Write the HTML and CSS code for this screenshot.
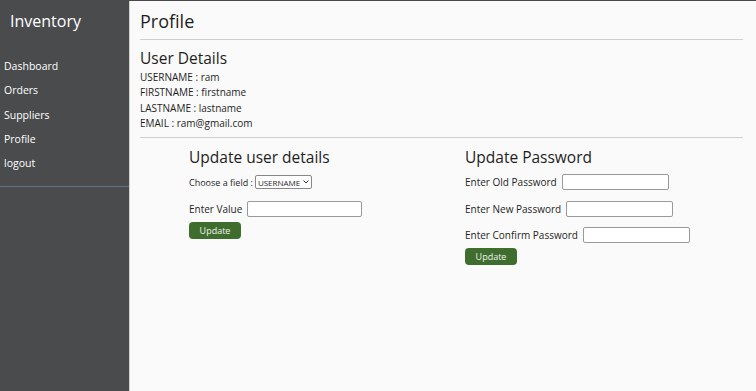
FILE: index.html
```html
<!DOCTYPE html>
<html lang="en">
<head>
    <meta charset="UTF-8">
    <meta name="viewport" content="width=device-width, initial-scale=1.0">
    <title>Inventory - Profile</title>
    <link rel="stylesheet" href="styles.css">
</head>
<body>
    <div class="sidebar">
        <div class="brand">Inventory</div>
        <ul class="nav">
            <li><a href="#">Dashboard</a></li>
            <li><a href="#">Orders</a></li>
            <li><a href="#">Suppliers</a></li>
            <li><a href="#">Profile</a></li>
            <li><a href="#">logout</a></li>
        </ul>
    </div>

    <div class="main">
        <h1>Profile</h1>
        <hr>
        <h2>User Details</h2>
        <div class="details">
            <p>USERNAME : ram</p>
            <p>FIRSTNAME : firstname</p>
            <p>LASTNAME : lastname</p>
            <p>EMAIL : ram@gmail.com</p>
        </div>
        <hr>

        <div class="forms">
            <form class="card">
                <h3>Update user details</h3>
                <div class="row small">
                    <label>Choose a field :</label>
                    <span class="select-wrap">
                        <select>
                            <option>USERNAME</option>
                            <option>FIRSTNAME</option>
                            <option>LASTNAME</option>
                            <option>EMAIL</option>
                        </select>
                        <svg class="chevron" width="6" height="4" viewBox="0 0 6 4"><path d="M0.5 0.5 L3 3 L5.5 0.5" fill="none" stroke="#333" stroke-width="1"/></svg>
                    </span>
                </div>
                <div class="row">
                    <label>Enter Value</label>
                    <input type="text" class="wide">
                </div>
                <button type="button" class="btn">Update</button>
            </form>

            <form class="card">
                <h3>Update Password</h3>
                <div class="row">
                    <label>Enter Old Password</label>
                    <input type="password">
                </div>
                <div class="row">
                    <label>Enter New Password</label>
                    <input type="password">
                </div>
                <div class="row">
                    <label>Enter Confirm Password</label>
                    <input type="password">
                </div>
                <button type="button" class="btn">Update</button>
            </form>
        </div>
    </div>
</body>
</html>
```

FILE: styles.css
```css
* {
    box-sizing: border-box;
}
body {
    font-family: 'Open Sans', 'DejaVu Sans', sans-serif;
    margin: 0;
    height: 100vh;
    display: flex;
    background-color: #fafafa;
    color: #1e1e1e;
    border-top: 1px solid #4a4a4a;
    overflow: hidden;
}
.sidebar {
    width: 130px;
    background-color: #4a4b4d;
    border-right: 1px solid #d2d2d2;
    color: #fff;
}
.brand {
    font-size: 16px;
    padding: 9px 0 0 10px;
    height: 52px;
}
.nav {
    list-style: none;
    margin: 0;
    padding: 0 0 11px 0;
    border-bottom: 1px solid #5d7282;
}
.nav li {
    height: 24.3px;
    line-height: 24.3px;
    padding-left: 4px;
    font-size: 10.5px;
}
.nav li:first-child {
    margin-top: 1px;
}
.nav a {
    color: #fff;
    text-decoration: none;
}
.main {
    flex: 1;
    padding: 0 13px 0 10px;
}
h1 {
    font-size: 18px;
    font-weight: 400;
    margin: 8px 0 6px 0;
}
hr {
    border: none;
    border-top: 1px solid #cfcfcf;
    margin: 0;
}
h2 {
    font-size: 15.5px;
    font-weight: 400;
    margin: 7px 0 0.5px 0;
}
.details p {
    font-size: 10px;
    margin: 0;
    line-height: 15.6px;
}
.details {
    margin-bottom: 5px;
}
.forms {
    display: flex;
    padding: 8px 0 0 49px;
}
.card:first-child {
    width: 276px;
}
.card h3 {
    font-size: 15.5px;
    font-weight: 400;
    margin: 0 0 6px 0;
}
.row {
    display: flex;
    align-items: center;
    gap: 5px;
    font-size: 10px;
    height: 17px;
    margin-bottom: 9.5px;
}
.row.small {
    font-size: 9px;
    gap: 2px;
}
.select-wrap {
    position: relative;
    display: inline-block;
}
select {
    appearance: none;
    font-family: inherit;
    font-size: 8px;
    color: #1e1e1e;
    width: 57px;
    height: 14px;
    padding: 0 0 0 2px;
    border: 1px solid #888;
    border-radius: 2px;
    background: #fff;
}
.chevron {
    position: absolute;
    right: 3px;
    top: 5px;
    pointer-events: none;
}
input {
    width: 107px;
    height: 16px;
    border: 1px solid #999;
    border-radius: 2px;
    background: #fff;
}
input.wide {
    width: 115px;
}
.btn {
    display: block;
    font-family: inherit;
    font-size: 9px;
    color: #f2f2f2;
    background-color: #3f6d2d;
    border: none;
    border-radius: 4px;
    width: 52px;
    height: 17px;
    margin-top: -5px;
    cursor: pointer;
}
```
